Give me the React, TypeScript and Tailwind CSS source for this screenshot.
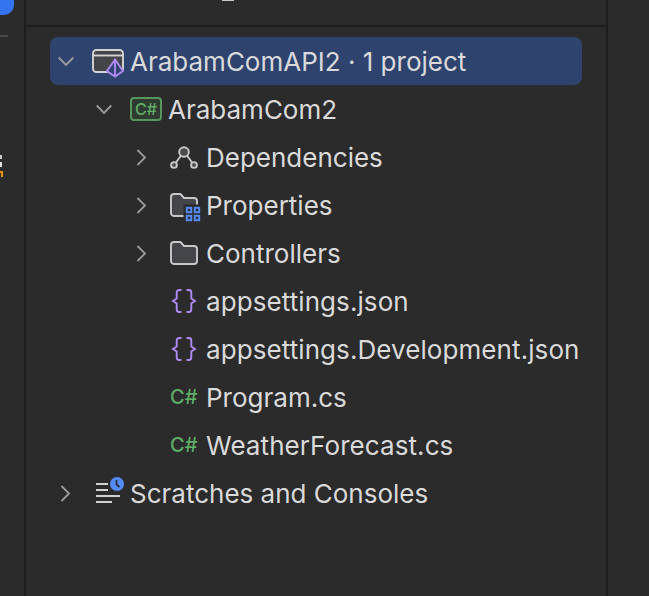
import type { ReactNode } from 'react';

const FONT = 'font-["Inter","Noto_Sans",sans-serif]';

function Chevron({ open }: { open: boolean }) {
  return (
    <svg width="16" height="16" viewBox="0 0 16 16" fill="none" stroke="#9c9c9c" strokeWidth="1.800" className="overflow-visible">
      {open ? <path d="M.7 4.500 8 12l7.300-7.500" /> : <path d="M3.500 1 11 8.500 3.500 16" />}
    </svg>
  );
}

function ModuleIcon() {
  return (
    <svg width="32" height="32" viewBox="0 0 32 32" fill="none" className="overflow-visible">
      <rect x="1" y="5" width="30" height="22" rx="3.500" fill="#434548" stroke="#d4d4d4" strokeWidth="1.900" />
      <path d="M1 10.500h30" stroke="#d4d4d4" strokeWidth="1.900" />
      <path d="M23 14.500 15 26l8 5.500L31 26z" fill="#2e436e" stroke="#b189f5" strokeWidth="1.900" />
      <path d="M23 15v16" stroke="#b189f5" strokeWidth="1.900" />
    </svg>
  );
}

function CsProjectIcon() {
  return (
    <span className="flex h-[24px] w-[32px] items-center justify-center rounded-[4px] border-2 border-[#57965c] bg-[#2f3b30] text-[16px] leading-none font-medium text-[#5fad65]">
      C#
    </span>
  );
}

function DependenciesIcon() {
  return (
    <svg width="32" height="32" viewBox="0 0 32 32" fill="none" stroke="#c8c8c8" strokeWidth="1.900">
      <circle cx="16" cy="11" r="4.800" fill="#4a4c50" />
      <circle cx="6" cy="24" r="2.900" fill="#4a4c50" />
      <circle cx="26" cy="24" r="2.900" fill="#4a4c50" />
      <path d="M13 14.500 8 21.500M19 14.500l5 7" />
    </svg>
  );
}

function FolderIcon({ badge }: { badge?: boolean }) {
  return (
    <svg width="32" height="32" viewBox="0 0 32 32" fill="none" className="overflow-visible">
      <path
        d="M3 8a3 3 0 0 1 3-3h6.500l3.500 4h10a3 3 0 0 1 3 3v12a3 3 0 0 1-3 3H6a3 3 0 0 1-3-3z"
        fill="#434548"
        stroke="#c8c8c8"
        strokeWidth="1.900"
      />
      {badge && (
        <g stroke="#548af7" strokeWidth="2">
          <rect x="15.500" y="15.500" width="17" height="17" fill="#2b2b2b" stroke="none" />
          <rect x="18.800" y="18.800" width="4.400" height="4.400" />
          <rect x="26.800" y="18.800" width="4.400" height="4.400" />
          <rect x="18.800" y="26.800" width="4.400" height="4.400" />
          <rect x="26.800" y="26.800" width="4.400" height="4.400" />
        </g>
      )}
    </svg>
  );
}

function JsonIcon() {
  return (
    <svg width="32" height="32" viewBox="0 0 32 32" fill="none" stroke="#b189f5" strokeWidth="1.900">
      <path d="M13.500 5h-2.300a2.500 2.500 0 0 0-2.500 2.500v6L5 16l3.700 2.500v6a2.500 2.500 0 0 0 2.500 2.500h2.300" />
      <path d="M18.500 5h2.300a2.500 2.500 0 0 1 2.500 2.500v6L27 16l-3.700 2.500v6a2.500 2.500 0 0 1-2.500 2.500h-2.300" />
    </svg>
  );
}

function CsIcon() {
  return <span className="pl-[2px] text-[20px] leading-none font-medium text-[#5fad65]">C#</span>;
}

function ScratchIcon() {
  return (
    <svg width="32" height="32" viewBox="0 0 32 32" fill="none" className="overflow-visible">
      <path d="M4 7h12M4 13h12M4 19h24M4 25h16" stroke="#d0d0d0" strokeWidth="1.800" />
      <circle cx="25" cy="7" r="7" fill="#548af7" />
      <path d="M24.500 3v4.500l3 2.500" stroke="#2b2b2b" strokeWidth="1.700" />
    </svg>
  );
}

type RowProps = { depth: number; open?: boolean; icon: ReactNode; label: string; selected?: boolean; wide?: boolean };

function Row({ depth, open, icon, label, selected, wide }: RowProps) {
  const pad = depth === 0 ? 'pl-[8px]' : depth === 1 ? 'pl-[46px]' : 'pl-[84px]';
  return (
    <div className={`flex h-[48px] items-center rounded-[8px] ${pad} ${selected ? 'bg-[#2e436e]' : ''}`}>
      <span className="flex w-[34px] shrink-0 items-center">{open !== undefined && <Chevron open={open} />}</span>
      <span className="flex w-[38px] shrink-0 items-center">{icon}</span>
      <span className={`pt-[2px] text-[26px] leading-none whitespace-nowrap text-[#dadada] ${wide ? 'tracking-[0.08px]' : ''}`}>{label}</span>
    </div>
  );
}

export default function App() {
  return (
    <div className={`flex h-[596px] w-[649px] overflow-hidden bg-[#2b2b2b] ${FONT}`}>
      <aside className="relative h-full w-[26px] shrink-0 border-r-2 border-[#1e1e1e]">
        <div className="absolute -top-[14px] -left-[10px] h-[29px] w-[24px] rounded-[10px] bg-[#3574f0]" />
        <div className="absolute top-[35px] left-0 h-[2px] w-[8px] bg-[#4a4a4a]" />
        <div className="absolute top-[155px] left-0 h-[4px] w-[2px] bg-[#c8c8c8]" />
        <div className="absolute top-[162px] left-0 h-[5px] w-[2px] bg-[#e0e0e0]" />
        <div className="absolute top-[171px] left-0 h-[2px] w-[3px] bg-[#e8920c]" />
        <div className="absolute top-[173px] left-[1px] h-[4px] w-[2px] bg-[#e8920c]" />
      </aside>
      <main className="flex h-full w-[582px] shrink-0 flex-col border-r-2 border-[#1e1e1e]">
        <div className="relative h-[27px] shrink-0 border-b-2 border-[#1e1e1e]">
          <div className="absolute top-0 left-[196px] h-[1px] w-[12px] bg-[#c8c8c8]" />
        </div>
        <div className="flex flex-col px-[24px] pt-[10px]">
          <Row depth={0} open selected icon={<ModuleIcon />} label="ArabamComAPI2 · 1 project" />
          <Row depth={1} open icon={<CsProjectIcon />} label="ArabamCom2" />
          <Row depth={2} open={false} icon={<DependenciesIcon />} label="Dependencies" />
          <Row depth={2} open={false} icon={<FolderIcon badge />} label="Properties" />
          <Row depth={2} open={false} icon={<FolderIcon />} label="Controllers" />
          <Row depth={2} wide icon={<JsonIcon />} label="appsettings.json" />
          <Row depth={2} wide icon={<JsonIcon />} label="appsettings.Development.json" />
          <Row depth={2} icon={<CsIcon />} label="Program.cs" />
          <Row depth={2} wide icon={<CsIcon />} label="WeatherForecast.cs" />
          <Row depth={0} open={false} icon={<ScratchIcon />} label="Scratches and Consoles" />
        </div>
      </main>
      <div className="flex-1" />
    </div>
  );
}
